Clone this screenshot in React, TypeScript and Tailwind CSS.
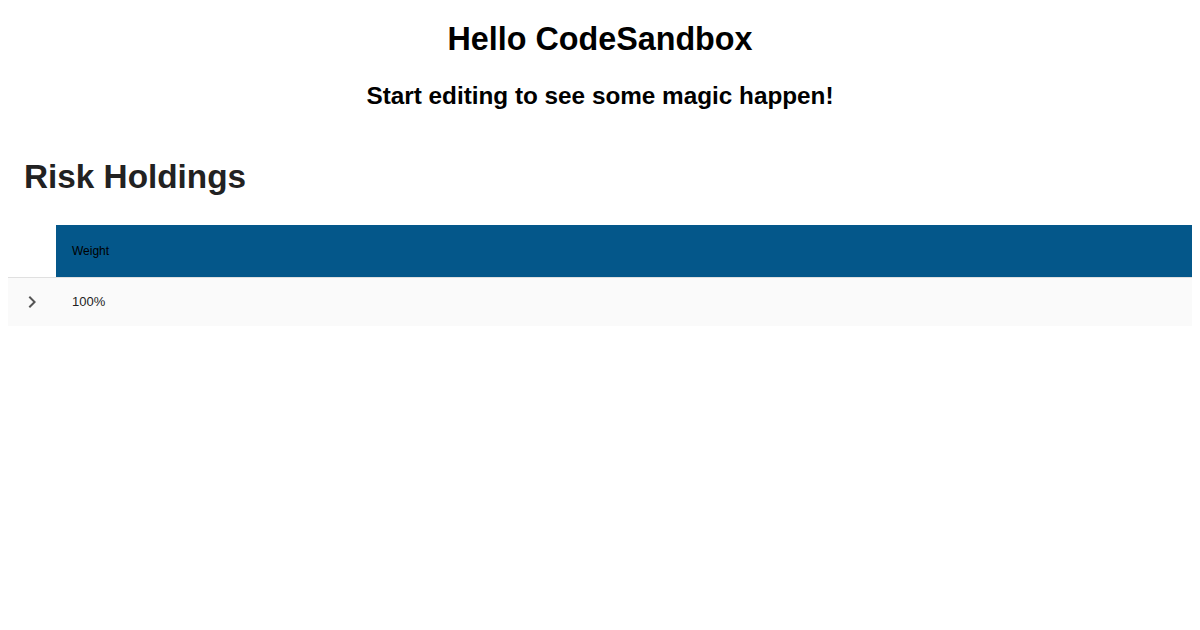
import React from 'react';

const ChevronRight: React.FC = () => (
  <svg width="24" height="24" viewBox="0 0 24 24" fill="#555">
    <path d="M10 6 8.59 7.41 13.17 12l-4.58 4.59L10 18l6-6z" />
  </svg>
);

const RiskHoldings: React.FC = () => {
  return (
    <div className="mt-[29px]">
      <div className="flex h-[53px] border-b border-[#e0e0e0]">
        <div className="w-12 bg-white" />
        <div className="flex-1 bg-[#04578a] flex items-center pl-4 text-[12px] text-black">Weight</div>
      </div>
      <div className="flex h-12 items-center bg-[#fafafa]">
        <div className="w-12 flex items-center justify-center">
          <ChevronRight />
        </div>
        <div className="pl-4 text-[13px] text-[#222]">100%</div>
      </div>
    </div>
  );
};

const App: React.FC = () => {
  return (
    <div className="px-2 min-h-screen bg-white" style={{ fontFamily: '"Liberation Sans", Arial, sans-serif' }}>
      <div className="text-center pt-[21px]">
        <h1 className="text-[32.3px] leading-[37px] font-bold text-black">Hello CodeSandbox</h1>
        <h2 className="mt-[24px] text-[24.3px] leading-[28px] font-bold text-black">Start editing to see some magic happen!</h2>
      </div>
      <h3 className="mt-[48px] pl-4 text-[33.3px] leading-[38px] font-bold text-[#222]">Risk Holdings</h3>
      <RiskHoldings />
    </div>
  );
};

export default App;
